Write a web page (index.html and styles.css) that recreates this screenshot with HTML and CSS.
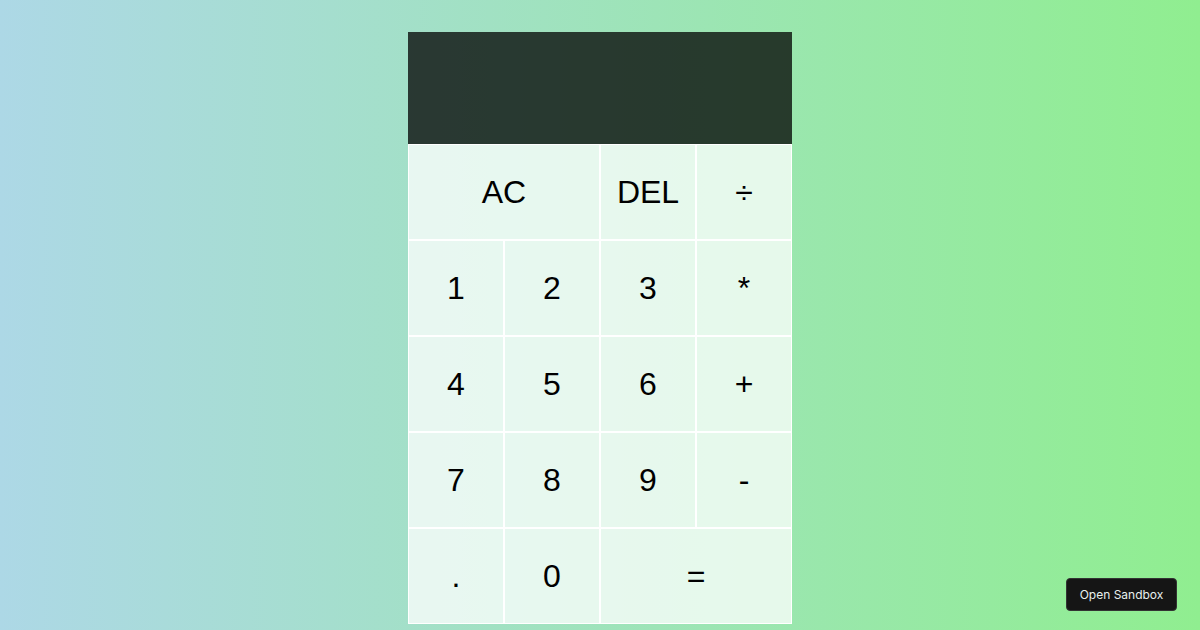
FILE: index.html
```html
<!DOCTYPE html>
<html>
<head>
<meta charset="utf-8">
<link rel="stylesheet" href="styles.css">
</head>
<body>
<div class="calculator-grid">
  <div class="output">
    <div class="previous-operand"></div>
    <div class="current-operand"></div>
  </div>
  <button class="span-two">AC</button>
  <button>DEL</button>
  <button>÷</button>
  <button>1</button>
  <button>2</button>
  <button>3</button>
  <button>*</button>
  <button>4</button>
  <button>5</button>
  <button>6</button>
  <button>+</button>
  <button>7</button>
  <button>8</button>
  <button>9</button>
  <button>-</button>
  <button>.</button>
  <button>0</button>
  <button class="span-two">=</button>
</div>
<a class="sandbox-btn">Open Sandbox</a>
</body>
</html>
```
FILE: styles.css
```css
*, *::before, *::after {
  box-sizing: border-box;
}
body {
  margin: 0;
  min-height: 100vh;
  background: linear-gradient(to right, #add8e6, #90ee90);
  font-family: "Liberation Sans", Arial, sans-serif;
}
.calculator-grid {
  display: grid;
  margin-top: 32px;
  justify-content: center;
  grid-template-columns: repeat(4, 96px);
  grid-template-rows: minmax(112px, auto) repeat(5, 96px);
}
.calculator-grid > button {
  cursor: pointer;
  font-family: "Liberation Sans", Arial, sans-serif;
  font-size: 32px;
  color: #000;
  border: 1px solid #fff;
  outline: none;
  padding: 0;
  background-color: rgba(255, 255, 255, 0.75);
}
.span-two {
  grid-column: span 2;
}
.output {
  grid-column: 1 / -1;
  background-color: rgba(0, 0, 0, 0.75);
  display: flex;
  align-items: flex-end;
  justify-content: space-around;
  flex-direction: column;
  padding: 10px;
  word-wrap: break-word;
  word-break: break-all;
}
.previous-operand {
  color: rgba(255, 255, 255, 0.75);
  font-size: 24px;
}
.current-operand {
  color: #fff;
  font-size: 40px;
}
.sandbox-btn {
  position: fixed;
  right: 23px;
  bottom: 19px;
  width: 111px;
  height: 33px;
  display: flex;
  align-items: center;
  justify-content: center;
  background: #151515;
  border: 1px solid #333;
  border-radius: 4px;
  color: #e8f0ee;
  font-family: Inter, "Liberation Sans", sans-serif;
  font-size: 12px;
}
```
